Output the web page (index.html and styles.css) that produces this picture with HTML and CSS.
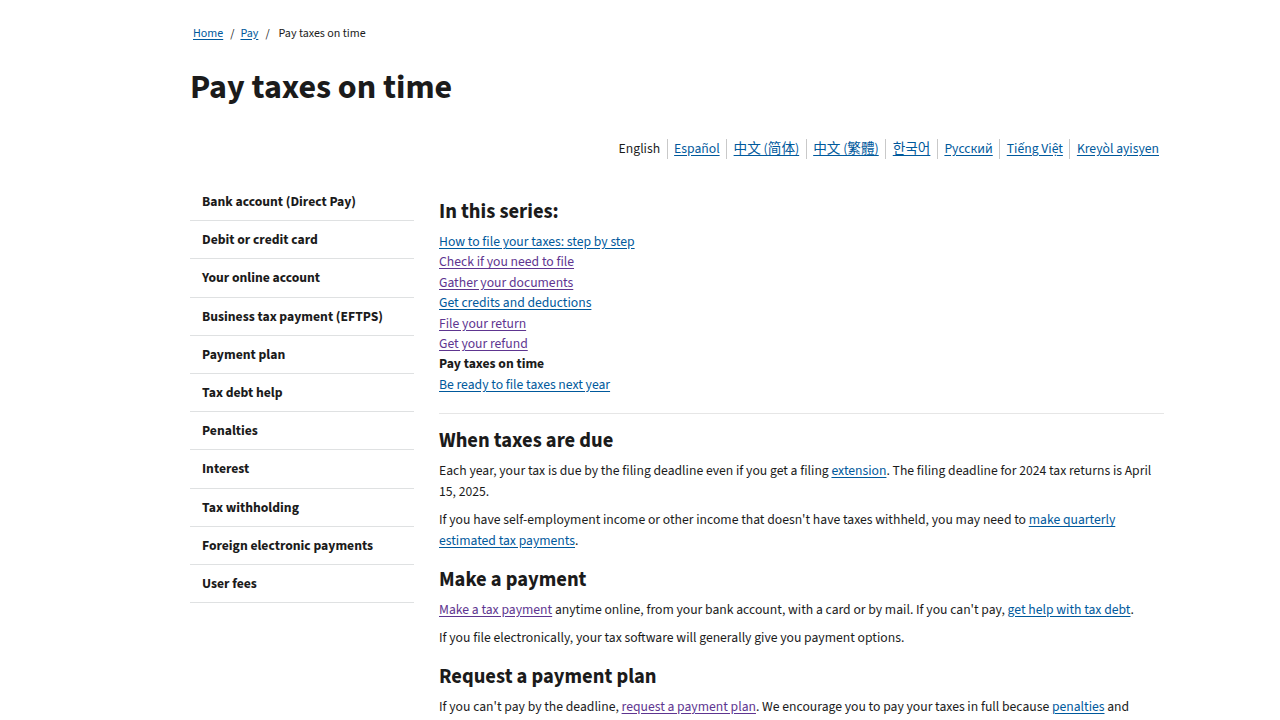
FILE: index.html
```html
<!DOCTYPE html>
<html lang="en">
<head>
<meta charset="utf-8">
<title>Pay taxes on time | Internal Revenue Service</title>
<link rel="stylesheet" href="styles.css">
</head>
<body>
<div class="page">
  <nav class="breadcrumb">
    <a href="#">Home</a><span class="sep">/</span><a href="#">Pay</a><span class="sep">/</span><span class="current">Pay taxes on time</span>
  </nav>
  <h1 class="title">Pay taxes on time</h1>
  <ul class="langs">
    <li class="lang-current">English</li>
    <li><a href="#">Español</a></li>
    <li><a href="#" lang="zh-Hans">中文 (简体)</a></li>
    <li><a href="#" lang="zh-Hant">中文 (繁體)</a></li>
    <li><a href="#" lang="ko">한국어</a></li>
    <li><a href="#">Русский</a></li>
    <li><a href="#">Tiếng Việt</a></li>
    <li><a href="#">Kreyòl ayisyen</a></li>
  </ul>
  <div class="columns">
    <aside class="sidenav">
      <ul>
        <li><a href="#">Bank account (Direct Pay)</a></li>
        <li><a href="#">Debit or credit card</a></li>
        <li><a href="#">Your online account</a></li>
        <li><a href="#">Business tax payment (EFTPS)</a></li>
        <li><a href="#">Payment plan</a></li>
        <li><a href="#">Tax debt help</a></li>
        <li><a href="#">Penalties</a></li>
        <li><a href="#">Interest</a></li>
        <li><a href="#">Tax withholding</a></li>
        <li><a href="#">Foreign electronic payments</a></li>
        <li><a href="#">User fees</a></li>
      </ul>
    </aside>
    <main class="content">
      <h2 class="series-title">In this series:</h2>
      <ul class="series">
        <li><a href="#">How to file your taxes: step by step</a></li>
        <li><a href="#" class="visited">Check if you need to file</a></li>
        <li><a href="#" class="visited">Gather your documents</a></li>
        <li><a href="#">Get credits and deductions</a></li>
        <li><a href="#" class="visited">File your return</a></li>
        <li><a href="#" class="visited">Get your refund</a></li>
        <li class="series-current">Pay taxes on time</li>
        <li><a href="#">Be ready to file taxes next year</a></li>
      </ul>
      <hr class="rule">
      <h2 class="section first">When taxes are due</h2>
      <p>Each year, your tax is due by the filing deadline even if you get a filing <a href="#">extension</a>. The filing deadline for 2024 tax returns is April 15, 2025.</p>
      <p>If you have self-employment income or other income that doesn't have taxes withheld, you may need to <a href="#">make quarterly estimated tax payments</a>.</p>
      <h2 class="section">Make a payment</h2>
      <p><a href="#" class="visited">Make a tax payment</a> anytime online, from your bank account, with a card or by mail. If you can't pay, <a href="#">get help with tax debt</a>.</p>
      <p>If you file electronically, your tax software will generally give you payment options.</p>
      <h2 class="section">Request a payment plan</h2>
      <p>If you can't pay by the deadline, <a href="#" class="visited">request a payment plan</a>. We encourage you to pay your taxes in full because <a href="#">penalties</a> and interest will continue to add up until your balance is paid.</p>
    </main>
  </div>
</div>
</body>
</html>
```
FILE: styles.css
```css
html, body {
  margin: 0;
  padding: 0;
  background: #ffffff;
}
body {
  font-family: "Source Sans 3", "Source Sans Pro", Lato, "Noto Sans CJK SC", sans-serif;
  color: #1b1b1b;
  font-size: 13.65px;
  line-height: 20.4px;
}
a {
  color: #00599c;
  text-decoration: underline;
  text-underline-offset: 2px;
}
a.visited {
  color: #5e3590;
}
.page {
  width: 974px;
  padding-left: 190px;
  height: 720px;
  overflow: hidden;
}
.breadcrumb {
  padding: 26px 0 0 3px;
  font-size: 12px;
  line-height: 16px;
  display: flex;
  align-items: center;
}
.breadcrumb .sep {
  padding: 0 7px 0 7px;
}
.breadcrumb .sep + a {
  margin-left: -1px;
}
.breadcrumb .current {
  margin-left: 2px;
}
.title {
  margin: 26px 0 0;
  font-size: 34px;
  line-height: 40px;
  font-weight: 700;
}
.langs {
  list-style: none;
  margin: 31px 0 0;
  padding: 0 5px 0 0;
  display: flex;
  justify-content: flex-end;
  font-size: 13.65px;
  line-height: 20px;
}
.langs li {
  padding: 0 6.5px;
  border-left: 1px solid #c9c9c9;
}
.langs li:first-child {
  border-left: 0;
}
.langs li:last-child {
  padding-right: 0;
}
.columns {
  margin-top: 24px;
  display: flex;
  gap: 25px;
}
.sidenav {
  width: 224px;
  flex: none;
}
.sidenav ul {
  list-style: none;
  margin: 0;
  padding: 0;
}
.sidenav li {
  border-bottom: 1px solid #dfe1e2;
}
.sidenav a {
  display: block;
  padding: 9px 12px;
  line-height: 19.2px;
  color: #1b1b1b;
  text-decoration: none;
  font-weight: 700;
}
.content {
  flex: 1;
  min-width: 0;
}
.series-title {
  margin: 17px 0 8px;
  font-size: 20.5px;
  line-height: 24px;
  font-weight: 700;
}
.series {
  list-style: none;
  margin: 0;
  padding: 0;
}
.series-current {
  font-weight: 700;
}
.rule {
  margin: 18px 0 0;
  border: 0;
  border-top: 1px solid #e6e6e6;
}
.section {
  margin: 16.5px 0 8px;
  font-size: 20.5px;
  line-height: 24px;
  font-weight: 700;
}
.section.first {
  margin-top: 15px;
}
.content p {
  margin: 0 0 8.3px;
}
```
